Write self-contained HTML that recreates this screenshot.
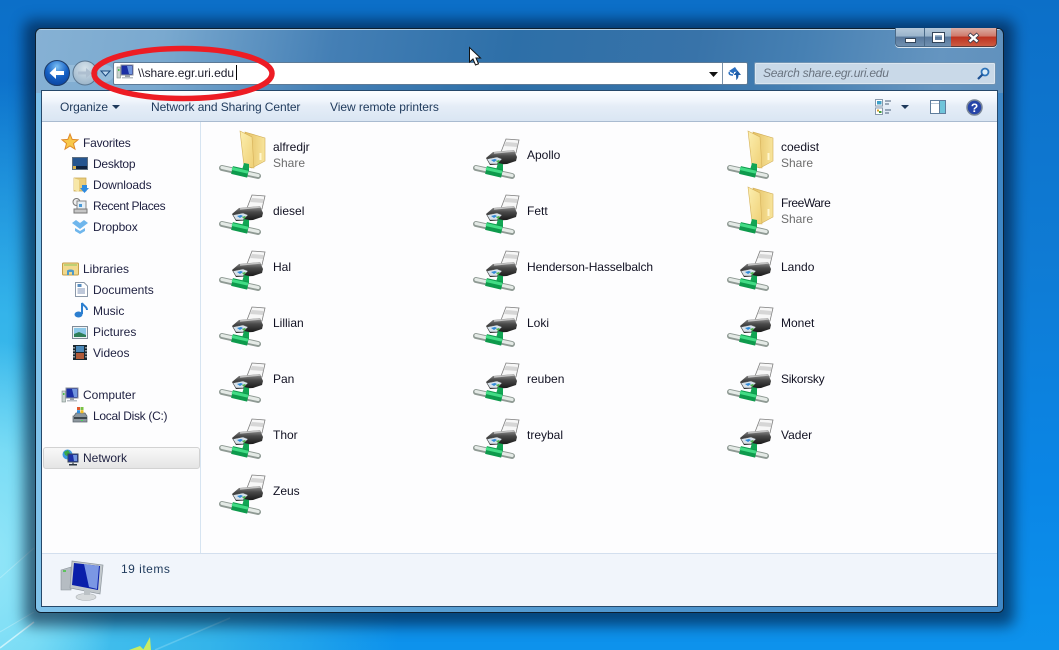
<!DOCTYPE html>
<html><head><meta charset="utf-8"><style>
html,body{margin:0;padding:0;width:1059px;height:650px;overflow:hidden}
body{position:relative;font:12px "Liberation Sans",sans-serif;color:#1b1b33;background:
radial-gradient(ellipse 130px 220px at -10px 560px,#93e6f8 0,#7adcf5 50%,rgba(122,220,245,0) 100%),
radial-gradient(ellipse 420px 520px at -20px 600px,#4fc8f0 0,#34b4ea 55%,rgba(40,160,230,0) 100%),
linear-gradient(180deg,#0c6fc8 0,#0f7bd4 40%,#0a86e6 75%,#0d92ec 100%)}
div,span,svg{position:absolute}
svg{overflow:visible}
.t{white-space:nowrap;line-height:14px;color:#111122}
.s{color:#6d6d6d}
.n{color:#1e2040}
.b{color:#1e395b}
</style></head><body>
<svg width="0" height="0" style="left:0;top:0">
<defs>
<linearGradient id="fd" x1="0" y1="0" x2="1" y2="1"><stop offset="0" stop-color="#fcefb0"/><stop offset="1" stop-color="#efcf74"/></linearGradient>
<linearGradient id="fb" x1="0" y1="0" x2="1" y2="0"><stop offset="0" stop-color="#e4bf62"/><stop offset="1" stop-color="#f8e59c"/></linearGradient>
<linearGradient id="pg" x1="0" y1="0" x2="0" y2="1"><stop offset="0" stop-color="#9a9a9a"/><stop offset=".4" stop-color="#4a4a4a"/><stop offset="1" stop-color="#141414"/></linearGradient>
<radialGradient id="back" cx=".5" cy=".25" r=".85"><stop offset="0" stop-color="#7cc0f4"/><stop offset=".5" stop-color="#1560c4"/><stop offset="1" stop-color="#0a3d96"/></radialGradient>
<radialGradient id="fwd" cx=".5" cy=".3" r=".8"><stop offset="0" stop-color="#d6e2ea"/><stop offset="1" stop-color="#93aec5"/></radialGradient>
<g id="pipe">
<path d="M23 37L25 30L30 31L30 40Z" fill="#12a554"/>
<path d="M3 35L39 43" stroke="#8f9a94" stroke-width="6" stroke-linecap="round"/>
<path d="M3 34.500L39 42.500" stroke="#e4eae6" stroke-width="3.200" stroke-linecap="round"/>
<path d="M13 37L29 40.700" stroke="#0e9a4c" stroke-width="8"/>
<path d="M13 35.500L29 39.200" stroke="#42dc85" stroke-width="3"/>
</g>
<g id="p">
<path d="M28 19L33 6L46 7L43 20Z" fill="#f7f7f7" stroke="#7f7f7f" stroke-width=".8"/>
<path d="M33 9L45 10L44 14L31 13Z" fill="#d6d6d6"/>
<path d="M13 25L20 19L41 17L44 24L43 28L34 31L17 32Z" fill="url(#pg)"/>
<path d="M21 20L41 18" stroke="#c4c4c4" stroke-width="1.500"/>
<path d="M14 26L24 24L29 26L24 31L17 31Z" fill="#d8e2ea" stroke="#555" stroke-width=".5"/>
<path d="M18 27L22 26L24 27L21 29Z" fill="#2f8ad8"/>
<path d="M23 28L26 27L27 28L25 30Z" fill="#4fb04f"/>
<use href="#pipe"/>
</g>
<g id="f">
<path d="M26 -1L46 5L46 28L33 35L26 33Z" fill="url(#fb)" stroke="#d1ad58" stroke-width=".6"/>
<path d="M21 -2L33 4L35 35L25 33Z" fill="url(#fd)" stroke="#d6b25a" stroke-width=".6"/>
<path d="M41.500 20v7" stroke="#fff7d0" stroke-width="2"/>
<use href="#pipe"/>
</g>
</defs>
</svg>

<!-- desktop streaks -->
<svg width="1059" height="650" style="left:0;top:0">
<path d="M0 632L34 612M0 578L34 548" stroke="#d6f6fd" stroke-width="1" opacity=".4"/>
<path d="M0 648L34 622" stroke="#eafcff" stroke-width="1.500" opacity=".7"/>
<path d="M129 650L140 646L144 650ZM143 650L150 637L151 650Z" fill="#c8ec62"/>
<path d="M155 650L230 618" stroke="#b4ecfa" stroke-width="1.500" opacity=".3"/>
</svg>

<!-- window -->
<div style="left:24px;top:20px;width:990px;height:606px;border-radius:8px;background:rgba(0,20,50,.6);filter:blur(7px)"></div>
<div style="left:35px;top:28px;width:967px;height:583px;border:1px solid #0d1f30;border-radius:6px;overflow:hidden;background:linear-gradient(100deg,#86b1d4 0,#7aa9cf 12%,#447fb5 28%,#2d6fa8 45%,#3873a9 62%,#4680b3 72%,#6595c0 85%,#5a8bb9 100%)">
  <div style="left:0;top:64px;width:967px;height:519px;background:linear-gradient(90deg,#80c2ea 0,#5aa0d4 40%,#3e86c5 100%)"></div>
  <div style="left:0;top:0;width:967px;height:1px;background:#b5d0e6"></div>
</div>

<!-- title buttons -->
<div style="left:895px;top:28px;width:28px;height:18px;border:1px solid #4a6a88;border-top:0;border-right:0;border-radius:0 0 0 4px;background:linear-gradient(#b4c8da 0,#9ab4cc 45%,#58789c 50%,#7090b0 100%);box-shadow:0 1px 0 #dbe7f1"></div>
<div style="left:924px;top:28px;width:26px;height:18px;border:1px solid #4a6a88;border-top:0;background:linear-gradient(#b4c8da 0,#9ab4cc 45%,#58789c 50%,#7090b0 100%);box-shadow:0 1px 0 #dbe7f1"></div>
<div style="left:951px;top:28px;width:45px;height:18px;border:1px solid #5a3a3a;border-top:0;border-left:0;border-radius:0 0 4px 0;background:linear-gradient(#dcaea4 0,#cf7a6c 45%,#bd3320 50%,#cc5a42 100%);box-shadow:0 1px 0 #dbe7f1"></div>
<div style="left:905px;top:38px;width:9px;height:3px;background:#fff;border:1px solid #33455a"></div>
<div style="left:933px;top:33px;width:7px;height:5px;border:2px solid #fff;outline:1px solid #33455a"></div>
<svg width="12" height="10" style="left:968px;top:33px"><path d="M1 1L10 9M10 1L1 9" stroke="#3a3a4a" stroke-width="4"/><path d="M1.500 1.500L9.500 8.500M9.500 1.500L1.500 8.500" stroke="#fff" stroke-width="2.400"/></svg>

<!-- nav -->
<div style="left:44px;top:65px;width:70px;height:17px;border-radius:9px;background:rgba(190,215,235,.35)"></div>
<svg width="80" height="30" style="left:44px;top:60px">
<circle cx="13" cy="13" r="12.500" fill="url(#back)" stroke="#1c3a66"/>
<path d="M20 11H12V7L5.500 13L12 19V15H20Z" fill="#fff"/>
<circle cx="41" cy="13" r="12" fill="url(#fwd)" stroke="#5a7690"/>
<path d="M34 11.500H42V8L48 13L42 18V14.500H34Z" fill="#aebfd0"/>
<path d="M57 11L66 11L61.500 16Z" fill="#bcd8f0" stroke="#1c4a80"/>
</svg>

<!-- address -->
<div style="left:113px;top:62px;width:633px;height:21px;border:1px solid #5d7a96;border-radius:2px;background:#fff"></div>
<div style="left:722px;top:63px;width:1px;height:21px;background:#7a92aa"></div>
<svg width="14" height="10" style="left:707px;top:69px"><path d="M2 3H11L6.500 8Z" fill="#111"/></svg>
<svg width="22" height="20" style="left:724px;top:64px"><path d="M11 3L5 7L10 10V8L14 7.500Z" fill="#2a6fc0"/><path d="M5.500 8C4.500 10 6 11 9 11" stroke="#2a6fc0" stroke-width="1.500" fill="none"/><path d="M12 16C14 15 14.500 13 14.500 11H17L13.500 6.500L9.500 11H12C12 13 12.500 15 12 16Z" fill="#1f5da8"/></svg>
<svg width="22" height="18" style="left:117px;top:64px">
<rect x="0" y="3" width="3.500" height="11" fill="#c9d3cf" stroke="#7b8a86" stroke-width=".6"/><rect x="1" y="5" width="1.500" height="2" fill="#49c14c"/>
<rect x="4" y="1" width="12" height="10" fill="#1b2fa5" stroke="#8a9098"/><path d="M10 2H15V10H12Z" fill="#6f94de"/><rect x="8" y="11" width="5" height="2" fill="#9aa1a8"/><rect x="5" y="13" width="11" height="1.500" fill="#b9c0c6"/>
</svg>
<div class="t" style="left:138px;top:66px;color:#1c1c2a;letter-spacing:-.04px">\\share.egr.uri.edu</div>
<div style="left:236px;top:65px;width:1px;height:15px;background:#000"></div>

<!-- search -->
<div style="left:754px;top:62px;width:240px;height:21px;border:1px solid #6e93b4;border-radius:2px;background:#c9d9e8;box-shadow:inset 0 0 0 1px #dbe6f0"></div>
<div class="t" style="left:763px;top:66px;font-style:italic;color:#69737f;letter-spacing:-.25px">Search share.egr.uri.edu</div>
<svg width="16" height="16" style="left:976px;top:66px"><circle cx="9" cy="6" r="3.500" fill="#d8ebf8" stroke="#2c72b8" stroke-width="1.800"/><path d="M6.500 8.500L2 13" stroke="#1b4f92" stroke-width="2.200"/></svg>

<!-- content frame -->
<div style="left:41px;top:90px;width:955px;height:515px;border:1px solid #26486a;background:#fdfdfe"></div>

<!-- toolbar -->
<div style="left:42px;top:91px;width:955px;height:31px;background:linear-gradient(#fdfeff 0,#f1f6fc 30%,#e5edf7 50%,#dae6f3 100%);border-bottom:1px solid #a9bbd0;box-sizing:border-box"></div>
<div class="t b" style="left:60px;top:100px;letter-spacing:-.1px">Organize</div>
<svg width="8" height="5" style="left:112px;top:105px"><path d="M0 0H8L4 4Z" fill="#1e395b"/></svg>
<div class="t b" style="left:151px;top:100px;letter-spacing:-.08px">Network and Sharing Center</div>
<div class="t b" style="left:330px;top:100px;letter-spacing:-.05px">View remote printers</div>
<svg width="20" height="18" style="left:875px;top:99px">
<rect x=".5" y=".5" width="7" height="6.500" fill="#fff" stroke="#8a9aac"/><rect x="2" y="2" width="4.500" height="3.500" fill="#3fa0c8"/>
<rect x=".5" y="9" width="7" height="6.500" fill="#fff" stroke="#8a9aac"/><rect x="2" y="10.500" width="2" height="2" fill="#d9a02c"/><rect x="4" y="12" width="2.500" height="2" fill="#3c9a3c"/>
<path d="M10 2H16M10 5H14M10 11H16M10 14H14" stroke="#4a5f78" stroke-width="1"/>
</svg>
<svg width="8" height="5" style="left:901px;top:105px"><path d="M0 0H8L4 4Z" fill="#1e395b"/></svg>
<svg width="17" height="15" style="left:930px;top:100px"><rect x=".5" y=".5" width="15" height="13" fill="#fff" stroke="#5f7d9c"/><rect x="10" y="1" width="5" height="12" fill="#6fc4da"/><path d="M9.500 1v12" stroke="#5f7d9c"/><path d="M1 3.500H9" stroke="#b8c8d8"/></svg>
<svg width="17" height="17" style="left:966px;top:99px"><circle cx="8.500" cy="8.500" r="7.500" fill="#2644a8" stroke="#7a8798" stroke-width="1.500"/><text x="8.500" y="13" text-anchor="middle" font-family="Liberation Sans" font-weight="700" font-size="12" fill="#fff">?</text></svg>

<!-- sidebar -->
<div style="left:200px;top:122px;width:1px;height:431px;background:#d6e4f1"></div>
<div style="left:43px;top:447px;width:155px;height:20px;border:1px solid #d2d2d2;border-radius:3px;background:linear-gradient(#f8f8f8,#e5e5e5)"></div>
<div class="t n" style="left:83px;top:136px;letter-spacing:-.2px">Favorites</div>
<div class="t n" style="left:93px;top:157px;letter-spacing:-.25px">Desktop</div>
<div class="t n" style="left:93px;top:178px;letter-spacing:-.1px">Downloads</div>
<div class="t n" style="left:93px;top:199px;letter-spacing:-.4px">Recent Places</div>
<div class="t n" style="left:93px;top:220px;letter-spacing:-.1px">Dropbox</div>
<div class="t n" style="left:83px;top:262px">Libraries</div>
<div class="t n" style="left:93px;top:283px">Documents</div>
<div class="t n" style="left:93px;top:304px">Music</div>
<div class="t n" style="left:93px;top:325px">Pictures</div>
<div class="t n" style="left:93px;top:346px">Videos</div>
<div class="t n" style="left:83px;top:388px">Computer</div>
<div class="t n" style="left:93px;top:409px;letter-spacing:-.3px">Local Disk (C:)</div>
<div class="t n" style="left:83px;top:451px">Network</div>

<svg width="16" height="16" style="left:62px;top:134px"><path d="M8 0L10.200 5.400L16 5.800L11.500 9.500L13 15.200L8 12L3 15.200L4.500 9.500L0 5.800L5.800 5.400Z" fill="#f8c84a" stroke="#e08a2a"/></svg>
<svg width="16" height="14" style="left:72px;top:157px"><rect x=".5" y=".5" width="15" height="12" fill="#25558f" stroke="#5e6f80"/><rect x="4" y="9" width="11" height="3" fill="#10233f"/><rect x="1" y="9" width="3" height="3" fill="#d8b04a"/></svg>
<svg width="16" height="16" style="left:73px;top:177px"><path d="M1 1L13 1V14H1Z" fill="#e9cd7c" stroke="#c8a550" stroke-width=".7"/><path d="M1 1L6 3V15L1 13Z" fill="#f7e7a8"/><path d="M9 8H14V11H16L11.500 16L7 11H9Z" fill="#2d8ae0"/></svg>
<svg width="16" height="16" style="left:72px;top:198px"><circle cx="4.500" cy="4" r="3.500" fill="#eee" stroke="#777"/><rect x="5" y="3" width="9" height="8" fill="#e6eef4" stroke="#888"/><rect x="7" y="6" width="3" height="3" fill="#4a9ad8"/><rect x="2" y="11" width="13" height="4" fill="#c6c6c6" stroke="#777"/></svg>
<svg width="16" height="15" style="left:72px;top:219px"><path d="M4 1L8 4L4 7L0 4ZM12 1L16 4L12 7L8 4ZM4 7L8 4L12 7L8 10ZM3 9L8 12L13 9V12L8 15L3 12Z" fill="#6fb6ec"/></svg>
<svg width="17" height="14" style="left:62px;top:262px"><rect x=".5" y="1" width="16" height="12" rx="1" fill="#f2d98c" stroke="#c49e48"/><path d="M2 3H15" stroke="#8cc85a"/><path d="M5 13V9C5 7 12 7 12 9V13H10V10H7V13Z" fill="#4f9ac8"/></svg>
<svg width="13" height="15" style="left:75px;top:282px"><path d="M.5 .5H9L12.500 4V14.500H.5Z" fill="#fff" stroke="#8b98a8"/><path d="M2.500 7H10M2.500 9H10M2.500 11H10" stroke="#7e90b6"/><rect x="2.500" y="2" width="4" height="3" fill="#5a8ec0"/></svg>
<svg width="14" height="16" style="left:74px;top:302px"><ellipse cx="4.500" cy="12.500" rx="4" ry="3" fill="#2c7fd0"/><path d="M8 12V1C9 4 13 4 13 8" fill="none" stroke="#2c7fd0" stroke-width="2"/></svg>
<svg width="16" height="13" style="left:72px;top:326px"><rect x=".5" y=".5" width="15" height="12" fill="#eef2f5" stroke="#7f8b97"/><rect x="2" y="2" width="12" height="9" fill="#8cc8e8"/><path d="M2 8L7 6L14 9V11H2Z" fill="#2f7f58"/></svg>
<svg width="14" height="15" style="left:73px;top:345px"><rect width="14" height="15" fill="#1a2830"/><rect x="3" y="1" width="8" height="6" fill="#4a88b8"/><rect x="3" y="8" width="8" height="6" fill="#b05a38"/><path d="M1 2V13M13 2V13" stroke="#dfe7ea" stroke-width="1.200" stroke-dasharray="1.500 1.500"/></svg>
<svg width="18" height="17" style="left:62px;top:387px">
<rect x="0" y="4" width="3.500" height="11" fill="#c9d3cf" stroke="#7b8a86" stroke-width=".6"/><rect x="1" y="6" width="1.500" height="2" fill="#49c14c"/>
<rect x="4" y="1" width="12" height="10" fill="#1b2fa5" stroke="#8a9098"/><path d="M10 2H15V10H12Z" fill="#6f94de"/><rect x="8" y="11" width="4" height="2" fill="#9aa1a8"/><rect x="5" y="13" width="10" height="1.500" fill="#b9c0c6"/>
</svg>
<svg width="16" height="16" style="left:72px;top:407px"><path d="M2 9L4 6H13L15 9V15H1V9Z" fill="#8d979e" stroke="#5c666e" stroke-width=".7"/><rect x="2" y="10" width="13" height="2" fill="#3d474e"/><rect x="9" y="13" width="2" height="1" fill="#4adc5c"/><rect x="5" y="0" width="3" height="3" fill="#e0572c"/><rect x="8.500" y="0" width="3" height="3" fill="#7ac143"/><rect x="5" y="3.200" width="3" height="3" fill="#2e8fe0"/><rect x="8.500" y="3.200" width="3" height="3" fill="#f3bc20"/></svg>
<svg width="18" height="18" style="left:62px;top:449px"><circle cx="5.500" cy="5.500" r="5" fill="#3d9ae0"/><path d="M2 3L6 1L8 4L5 7L3 6ZM7 8L10 7V10L8 10Z" fill="#38a848"/><rect x="6" y="5" width="10" height="8" fill="#1b2fa5" stroke="#3a4a5a"/><path d="M11 6H15V12H12Z" fill="#6f94de"/><rect x="10" y="13" width="2" height="2" fill="#7a828a"/><rect x="7" y="15" width="8" height="1.500" fill="#2a3440"/></svg>

<!-- items -->
<svg width="60" height="60" style="left:219px;top:133px"><use href="#f"/></svg>
<div class="t" style="left:273px;top:140px">alfredjr</div><div class="t s" style="left:273px;top:156px">Share</div>
<svg width="60" height="60" style="left:473px;top:133px"><use href="#p"/></svg>
<div class="t" style="left:527px;top:148px">Apollo</div>
<svg width="60" height="60" style="left:727px;top:133px"><use href="#f"/></svg>
<div class="t" style="left:781px;top:140px">coedist</div><div class="t s" style="left:781px;top:156px">Share</div>

<svg width="60" height="60" style="left:219px;top:189px"><use href="#p"/></svg>
<div class="t" style="left:273px;top:204px">diesel</div>
<svg width="60" height="60" style="left:473px;top:189px"><use href="#p"/></svg>
<div class="t" style="left:527px;top:204px">Fett</div>
<svg width="60" height="60" style="left:727px;top:189px"><use href="#f"/></svg>
<div class="t" style="left:781px;top:196px;letter-spacing:-.45px">FreeWare</div><div class="t s" style="left:781px;top:212px">Share</div>

<svg width="60" height="60" style="left:219px;top:245px"><use href="#p"/></svg>
<div class="t" style="left:273px;top:260px">Hal</div>
<svg width="60" height="60" style="left:473px;top:245px"><use href="#p"/></svg>
<div class="t" style="left:527px;top:260px;letter-spacing:-.1px">Henderson-Hasselbalch</div>
<svg width="60" height="60" style="left:727px;top:245px"><use href="#p"/></svg>
<div class="t" style="left:781px;top:260px">Lando</div>

<svg width="60" height="60" style="left:219px;top:301px"><use href="#p"/></svg>
<div class="t" style="left:273px;top:316px">Lillian</div>
<svg width="60" height="60" style="left:473px;top:301px"><use href="#p"/></svg>
<div class="t" style="left:527px;top:316px">Loki</div>
<svg width="60" height="60" style="left:727px;top:301px"><use href="#p"/></svg>
<div class="t" style="left:781px;top:316px">Monet</div>

<svg width="60" height="60" style="left:219px;top:357px"><use href="#p"/></svg>
<div class="t" style="left:273px;top:372px">Pan</div>
<svg width="60" height="60" style="left:473px;top:357px"><use href="#p"/></svg>
<div class="t" style="left:527px;top:372px">reuben</div>
<svg width="60" height="60" style="left:727px;top:357px"><use href="#p"/></svg>
<div class="t" style="left:781px;top:372px;letter-spacing:-.25px">Sikorsky</div>

<svg width="60" height="60" style="left:219px;top:413px"><use href="#p"/></svg>
<div class="t" style="left:273px;top:428px">Thor</div>
<svg width="60" height="60" style="left:473px;top:413px"><use href="#p"/></svg>
<div class="t" style="left:527px;top:428px">treybal</div>
<svg width="60" height="60" style="left:727px;top:413px"><use href="#p"/></svg>
<div class="t" style="left:781px;top:428px">Vader</div>

<svg width="60" height="60" style="left:219px;top:469px"><use href="#p"/></svg>
<div class="t" style="left:273px;top:484px">Zeus</div>

<!-- status -->
<div style="left:42px;top:553px;width:955px;height:53px;background:#f1f5fb;border-top:1px solid #d3dfee;box-sizing:border-box"></div>
<div class="t b" style="left:121px;top:562px;letter-spacing:.5px">19 items</div>
<svg width="46" height="42" style="left:60px;top:558px">
<path d="M1 12L11 9V32L1 32Z" fill="#b5bcc2" stroke="#8a9299" stroke-width=".6"/><rect x="3" y="12" width="3" height="2" fill="#5cc25c"/>
<path d="M12 3L43 7L40 36L10 30Z" fill="#c2c8cc" stroke="#8f979e" stroke-width=".7"/>
<path d="M14 5L40 8L38 32L12 27Z" fill="#0a1faa"/><path d="M24 6L39 8L37 31L29 29Z" fill="#7b97e4"/>
<ellipse cx="26" cy="39" rx="10" ry="3.500" fill="#d6dadc" stroke="#a8aeb2" stroke-width=".6"/>
<path d="M24 31L30 32V37H24Z" fill="#bcc2c6"/>
</svg>

<!-- red ellipse -->
<svg width="1059" height="120" style="left:0;top:0"><ellipse cx="183" cy="73.500" rx="89" ry="25" fill="none" stroke="#ed1c24" stroke-width="5.500"/></svg>

<!-- cursor -->
<svg width="16" height="22" style="left:469px;top:47px"><path d="M.5 .5V15L4 12L6.500 18L9.500 16.800L7 11H11.500Z" fill="#fff" stroke="#111" stroke-width="1"/></svg>
</body></html>
